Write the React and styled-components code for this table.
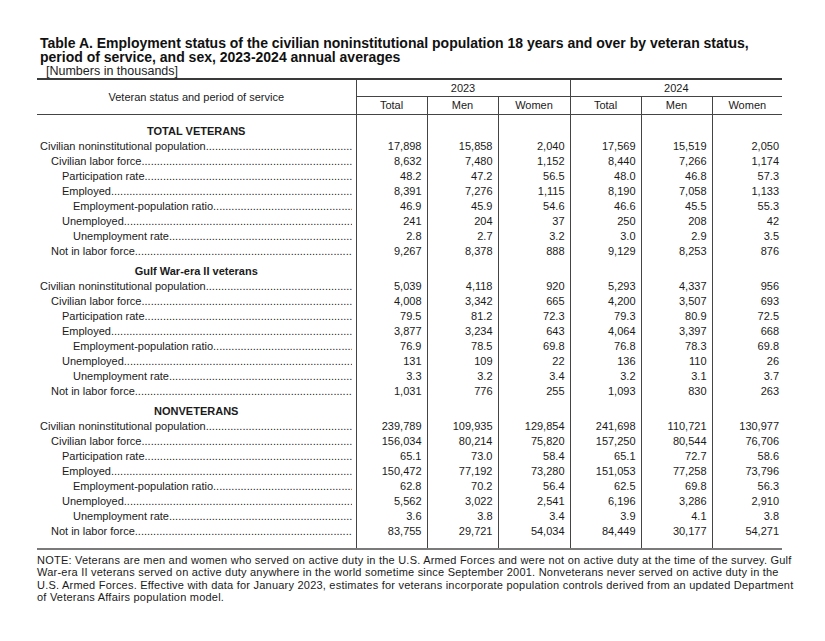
import React from "react";
import styled, { createGlobalStyle } from "styled-components";

const GlobalStyle = createGlobalStyle`
  html, body { margin: 0; padding: 0; background: #fff; }
  body { font-family: "Liberation Sans", Arial, sans-serif; color: #1a1a1a; }
`;

const Page = styled.div`
  width: 825px;
  height: 641px;
  box-sizing: border-box;
  padding: 36px 0 0 37px;
`;

const Title = styled.h1`
  margin: 0;
  padding-left: 3px;
  font-size: 14px;
  line-height: 14px;
  font-weight: bold;
  color: #111;
`;

const Units = styled.div`
  padding-left: 9px;
  margin-top: 1px;
  font-size: 12.5px;
  line-height: 13px;
  color: #222;
`;

const Table = styled.table`
  width: 745px;
  border-collapse: collapse;
  table-layout: fixed;
  border-top: 2px solid #3a3a3a;
  border-bottom: 2px solid #7a7a7a;
  font-size: 11px;
  color: #1a1a1a;
`;

const StubHead = styled.th`
  font-weight: normal;
  text-align: center;
  vertical-align: middle;
  border-bottom: 1px solid #444;
  padding: 0;
`;

const YearHead = styled.th`
  font-weight: normal;
  text-align: center;
  height: 16px;
  line-height: 16px;
  padding: 0;
  border-left: 1px solid #444;
  border-bottom: 1px solid #444;
`;

const SubHead = styled.th`
  font-weight: normal;
  text-align: center;
  height: 17px;
  line-height: 17px;
  padding: 0;
  border-left: 1px solid #444;
  border-bottom: 1px solid #444;
`;

const SectionLabel = styled.td`
  font-weight: bold;
  text-align: center;
  padding: ${(p) => (p.$first ? "9px" : "5px")} 0 0 0;
  height: 15px;
  line-height: 15px;
  vertical-align: bottom;
`;

const BlankCell = styled.td`
  border-left: 1px solid #444;
  padding: 0;
`;

const LabelCell = styled.td`
  padding: 0 4px 0 ${(p) => 3 + p.$level * 11}px;
  height: 15px;
  line-height: 15px;
`;

const Leader = styled.div`
  display: flex;
  white-space: nowrap;
`;

const Dots = styled.span`
  flex: 1;
  overflow: hidden;
  white-space: nowrap;
  &::after {
    content: "....................................................................................................................................";
  }
`;

const NumCell = styled.td`
  text-align: right;
  padding: 0 ${(p) => (p.$last ? 3 : 5)}px 0 0;
  height: 15px;
  line-height: 15px;
  border-left: 1px solid #444;
`;

const SpacerCell = styled.td`
  height: 9px;
  padding: 0;
  border-left: ${(p) => (p.$stub ? "none" : "1px solid #444")};
`;

const Note = styled.p`
  margin: 4px 0 0 0;
  font-family: "Liberation Sans", Arial, sans-serif;
  font-size: 11px;
  line-height: 12.4px;
  letter-spacing: 0.22px;
  color: #1a1a1a;
  white-space: nowrap;
`;

const labels = [
  ["Civilian noninstitutional population", 0],
  ["Civilian labor force", 1],
  ["Participation rate", 2],
  ["Employed", 2],
  ["Employment-population ratio", 3],
  ["Unemployed", 2],
  ["Unemployment rate", 3],
  ["Not in labor force", 1],
];

const sections = [
  {
    title: "TOTAL VETERANS",
    rows: [
      ["17,898", "15,858", "2,040", "17,569", "15,519", "2,050"],
      ["8,632", "7,480", "1,152", "8,440", "7,266", "1,174"],
      ["48.2", "47.2", "56.5", "48.0", "46.8", "57.3"],
      ["8,391", "7,276", "1,115", "8,190", "7,058", "1,133"],
      ["46.9", "45.9", "54.6", "46.6", "45.5", "55.3"],
      ["241", "204", "37", "250", "208", "42"],
      ["2.8", "2.7", "3.2", "3.0", "2.9", "3.5"],
      ["9,267", "8,378", "888", "9,129", "8,253", "876"],
    ],
  },
  {
    title: "Gulf War-era II veterans",
    rows: [
      ["5,039", "4,118", "920", "5,293", "4,337", "956"],
      ["4,008", "3,342", "665", "4,200", "3,507", "693"],
      ["79.5", "81.2", "72.3", "79.3", "80.9", "72.5"],
      ["3,877", "3,234", "643", "4,064", "3,397", "668"],
      ["76.9", "78.5", "69.8", "76.8", "78.3", "69.8"],
      ["131", "109", "22", "136", "110", "26"],
      ["3.3", "3.2", "3.4", "3.2", "3.1", "3.7"],
      ["1,031", "776", "255", "1,093", "830", "263"],
    ],
  },
  {
    title: "NONVETERANS",
    rows: [
      ["239,789", "109,935", "129,854", "241,698", "110,721", "130,977"],
      ["156,034", "80,214", "75,820", "157,250", "80,544", "76,706"],
      ["65.1", "73.0", "58.4", "65.1", "72.7", "58.6"],
      ["150,472", "77,192", "73,280", "151,053", "77,258", "73,796"],
      ["62.8", "70.2", "56.4", "62.5", "69.8", "56.3"],
      ["5,562", "3,022", "2,541", "6,196", "3,286", "2,910"],
      ["3.6", "3.8", "3.4", "3.9", "4.1", "3.8"],
      ["83,755", "29,721", "54,034", "84,449", "30,177", "54,271"],
    ],
  },
];

const sub = ["Total", "Men", "Women", "Total", "Men", "Women"];

export default function App() {
  return (
    <>
      <GlobalStyle />
      <Page>
        <Title>
          Table A. Employment status of the civilian noninstitutional population 18 years and over by veteran status,
          <br />
          period of service, and sex, 2023-2024 annual averages
        </Title>
        <Units>[Numbers in thousands]</Units>
        <Table>
          <colgroup>
            <col style={{ width: 319 }} />
            <col style={{ width: 71 }} />
            <col style={{ width: 71 }} />
            <col style={{ width: 72 }} />
            <col style={{ width: 71 }} />
            <col style={{ width: 71 }} />
            <col style={{ width: 70 }} />
          </colgroup>
          <thead>
            <tr>
              <StubHead rowSpan={2}>Veteran status and period of service</StubHead>
              <YearHead colSpan={3}>2023</YearHead>
              <YearHead colSpan={3}>2024</YearHead>
            </tr>
            <tr>
              {sub.map((s, i) => (
                <SubHead key={i}>{s}</SubHead>
              ))}
            </tr>
          </thead>
          <tbody>
            {sections.map((sec, si) => (
              <React.Fragment key={sec.title}>
                <tr>
                  <SectionLabel $first={si === 0}>{sec.title}</SectionLabel>
                  {sub.map((_, i) => (
                    <BlankCell key={i} />
                  ))}
                </tr>
                {sec.rows.map((vals, ri) => (
                  <tr key={ri}>
                    <LabelCell $level={labels[ri][1]}>
                      <Leader>
                        <span>{labels[ri][0]}</span>
                        <Dots />
                      </Leader>
                    </LabelCell>
                    {vals.map((v, vi) => (
                      <NumCell key={vi} $last={vi === 5}>
                        {v}
                      </NumCell>
                    ))}
                  </tr>
                ))}
              </React.Fragment>
            ))}
            <tr>
              <SpacerCell $stub />
              {sub.map((_, i) => (
                <SpacerCell key={i} />
              ))}
            </tr>
          </tbody>
        </Table>
        <Note>
          NOTE: Veterans are men and women who served on active duty in the U.S. Armed Forces and were not on active duty at the time of the survey. Gulf
          <br />
          War-era II veterans served on active duty anywhere in the world sometime since September 2001. Nonveterans never served on active duty in the
          <br />
          U.S. Armed Forces. Effective with data for January 2023, estimates for veterans incorporate population controls derived from an updated Department
          <br />
          of Veterans Affairs population model.
        </Note>
      </Page>
    </>
  );
}
